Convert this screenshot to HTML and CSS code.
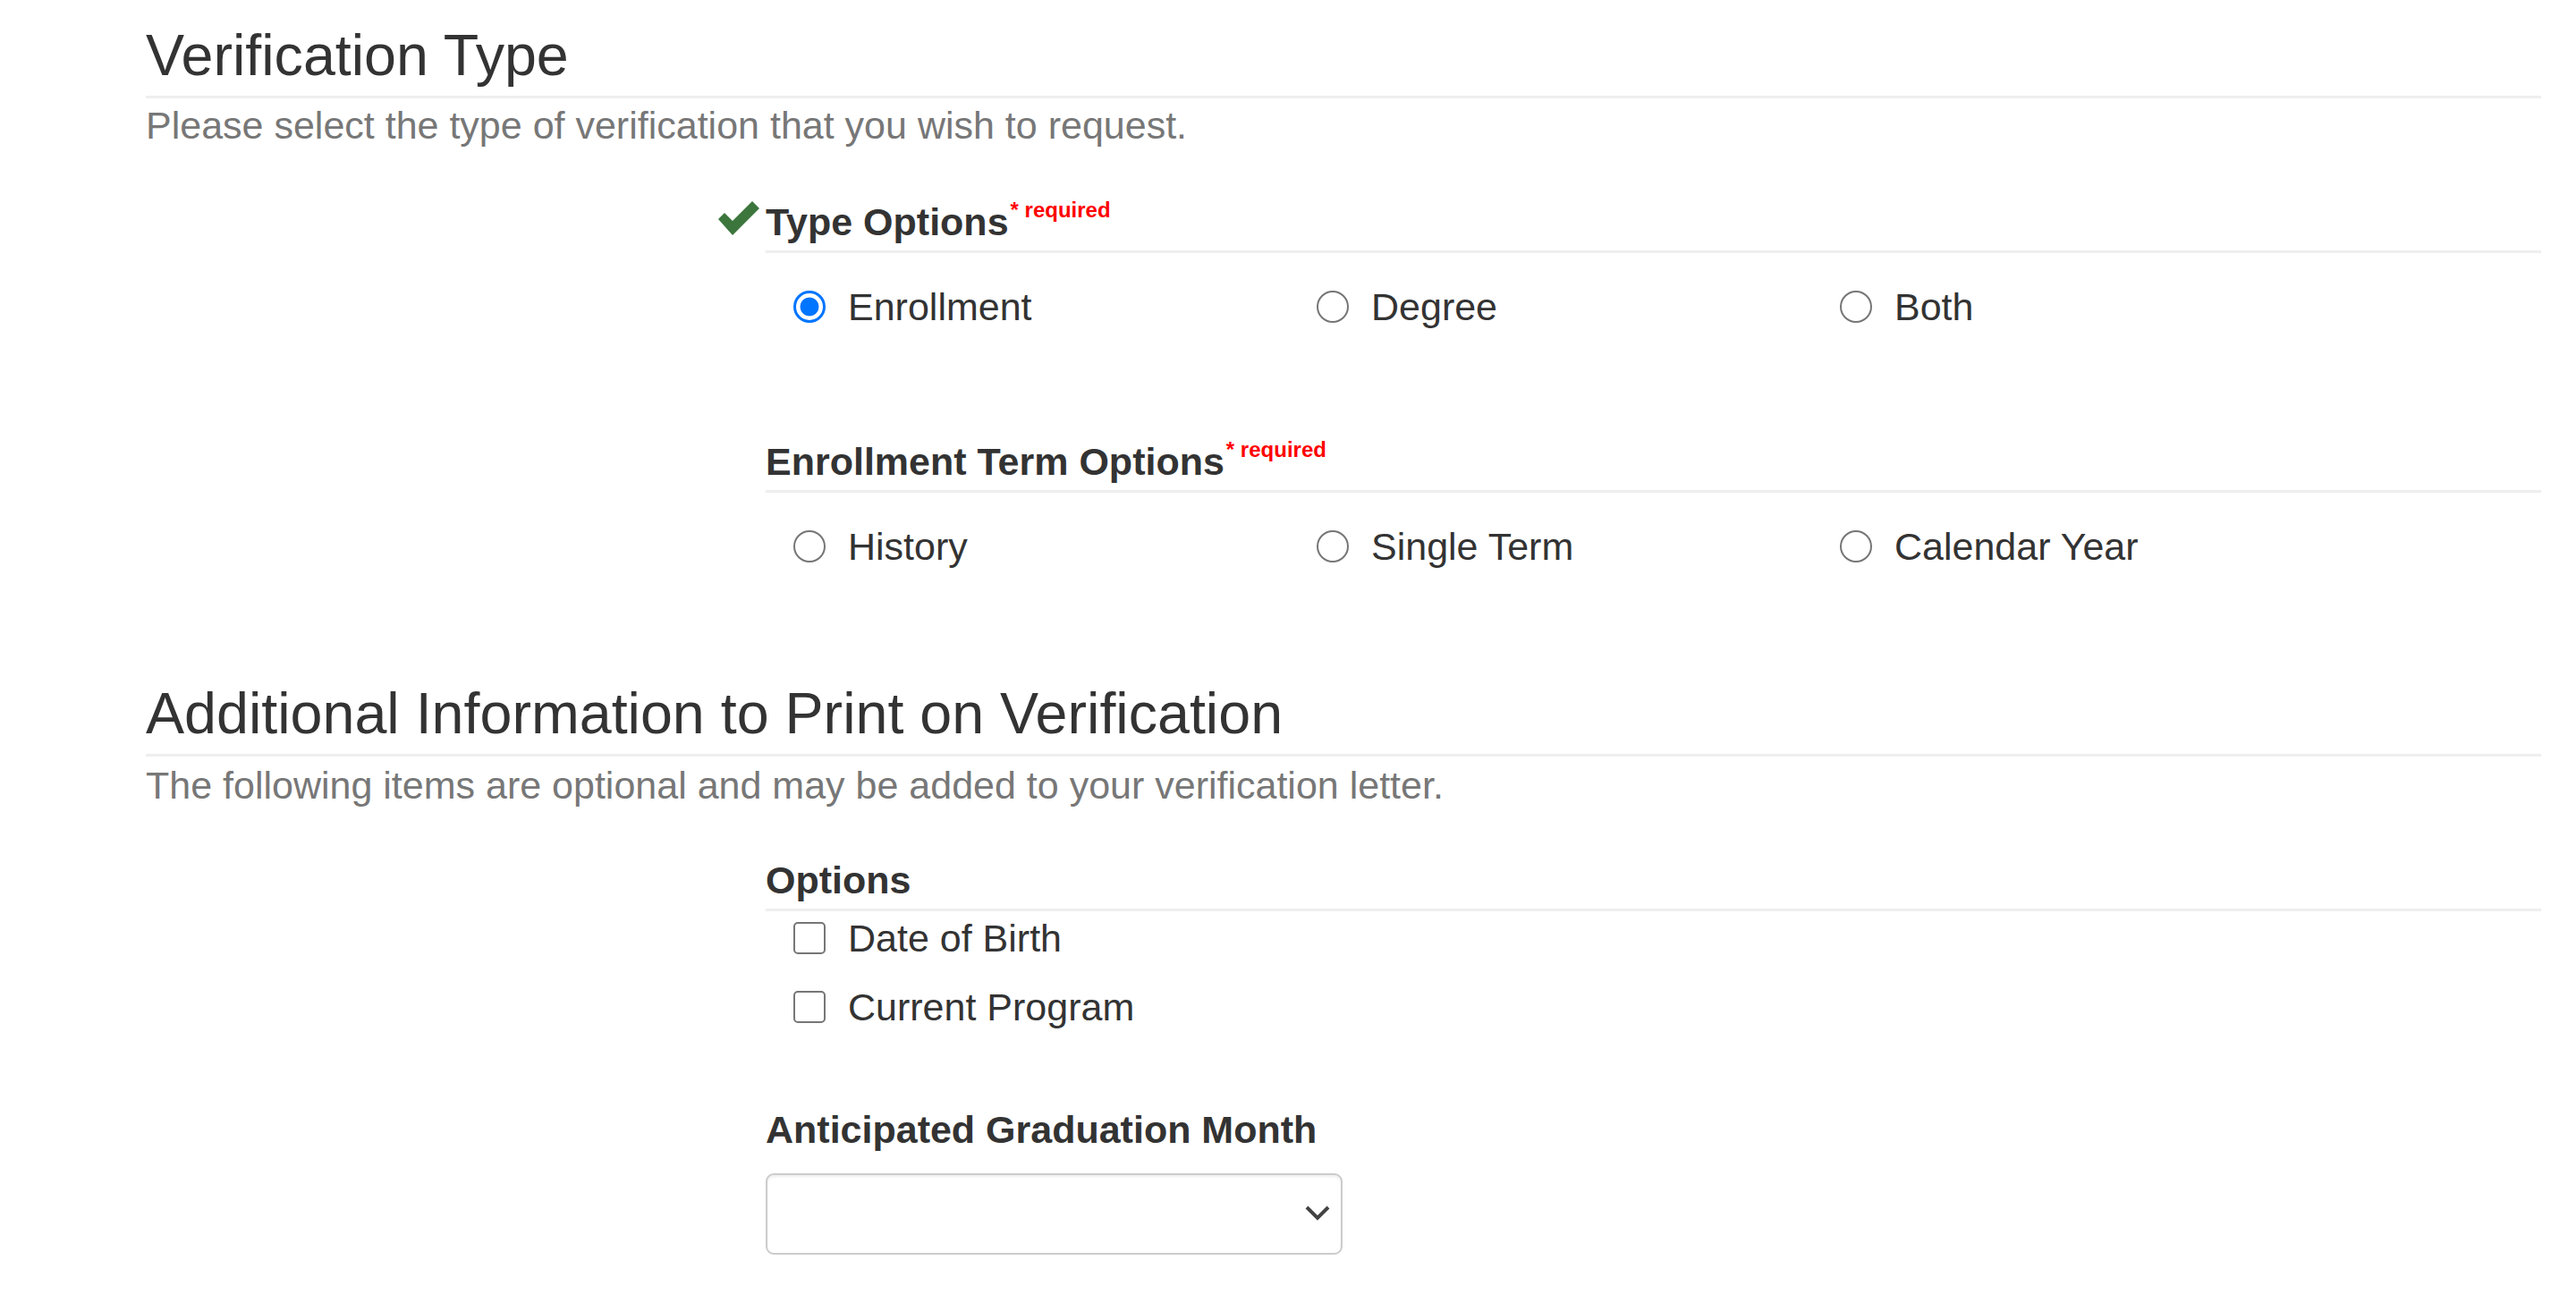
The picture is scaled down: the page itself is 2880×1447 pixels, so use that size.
FILE: index.html
```html
<!DOCTYPE html>
<html lang="en">
<head>
<meta charset="utf-8">
<title>Verification Request</title>
<link rel="stylesheet" href="styles.css">
</head>
<body>
<main class="page">
  <section class="section">
    <h1 class="section-title">Verification Type</h1>
    <p class="section-desc">Please select the type of verification that you wish to request.</p>
    <div class="form-area">
      <div class="group group-first">
        <div class="group-label"><svg class="ok-icon" width="46" height="38" viewBox="0 0 46 38" aria-hidden="true"><polygon points="0,20 7,13 16,22 38,0 46,8 16,38" fill="#3c763d"/></svg>Type Options<span class="req">* required</span></div>
        <div class="radio-row">
          <label class="opt"><input type="radio" name="vtype" checked><span>Enrollment</span></label>
          <label class="opt"><input type="radio" name="vtype"><span>Degree</span></label>
          <label class="opt"><input type="radio" name="vtype"><span>Both</span></label>
        </div>
      </div>
      <div class="group group-next">
        <div class="group-label">Enrollment Term Options<span class="req">* required</span></div>
        <div class="radio-row">
          <label class="opt"><input type="radio" name="term"><span>History</span></label>
          <label class="opt"><input type="radio" name="term"><span>Single Term</span></label>
          <label class="opt"><input type="radio" name="term"><span>Calendar Year</span></label>
        </div>
      </div>
    </div>
  </section>

  <section class="section section-second">
    <h1 class="section-title">Additional Information to Print on Verification</h1>
    <p class="section-desc">The following items are optional and may be added to your verification letter.</p>
    <div class="form-area">
      <div class="group group-first">
        <div class="group-label">Options</div>
        <div class="check-list">
          <label class="opt"><input type="checkbox" class="box"><span>Date of Birth</span></label>
          <label class="opt"><input type="checkbox" class="box"><span>Current Program</span></label>
        </div>
      </div>
      <div class="field">
        <label class="field-label" for="gradMonth">Anticipated Graduation Month</label>
        <div class="select-wrap">
          <select id="gradMonth" class="select"><option value=""></option></select>
          <svg class="chevron" width="28" height="17" viewBox="0 0 28 17" aria-hidden="true"><polyline points="2,2 14,14 26,2" fill="none" stroke="#444" stroke-width="4"/></svg>
        </div>
      </div>
    </div>
  </section>
</main>
</body>
</html>
```

FILE: styles.css
```css
html, body {
  margin: 0;
  padding: 0;
  background: #fff;
}

body {
  font-family: "Liberation Sans", Arial, Helvetica, sans-serif;
  color: #333;
}

.page {
  padding: 26px 39px 0 163px;
}

.section-title {
  margin: 0;
  font-size: 64.6px;
  font-weight: 400;
  line-height: 72px;
  padding-bottom: 9px;
  border-bottom: 3px solid #eee;
  color: #333;
}

.section-desc {
  margin: 0;
  font-size: 43px;
  line-height: 60px;
  color: #777;
}

.section-second {
  margin-top: 121px;
}

.section-second .section-desc {
  margin-top: 2px;
}

.section-second .group-first {
  margin-top: 46px;
}

.form-area {
  margin-left: 693px;
}

.group-first {
  margin-top: 48px;
}

.group-next {
  margin-top: 113px;
}

.group-label {
  font-size: 43px;
  font-weight: 700;
  line-height: 60px;
  padding-bottom: 2px;
  border-bottom: 3px solid #eee;
  color: #333;
}

.ok-icon {
  vertical-align: baseline;
  margin-left: -53px;
  margin-right: 7px;
}

.req {
  font-size: 24px;
  font-weight: 700;
  line-height: 1;
  color: #f00;
  vertical-align: 20px;
  margin-left: 2px;
}

.radio-row {
  display: grid;
  grid-template-columns: repeat(3, 585px);
  padding-left: 31px;
  margin-top: 30px;
}

.opt {
  display: flex;
  align-items: center;
  gap: 25px;
  font-size: 43px;
  line-height: 60px;
  color: #333;
}

.opt input {
  appearance: none;
  -webkit-appearance: none;
  flex: none;
  margin: 0;
  width: 36px;
  height: 36px;
  border: 2.5px solid #767676;
  border-radius: 50%;
  background: #fff;
}

.opt input:checked {
  border: 3px solid #0075ff;
  background: radial-gradient(circle, #0075ff 0, #0075ff 10px, #fff 10.8px);
}

.opt input.box {
  border-radius: 5px;
}

.check-list {
  display: flex;
  flex-direction: column;
  gap: 17px;
  padding-left: 31px;
}

.field {
  margin-top: 77px;
}

.field-label {
  display: block;
  font-size: 43px;
  font-weight: 700;
  line-height: 60px;
  color: #333;
}

.select-wrap {
  position: relative;
  width: 645px;
  margin-top: 19px;
}

.select {
  display: block;
  appearance: none;
  -webkit-appearance: none;
  box-sizing: border-box;
  width: 645px;
  height: 91px;
  margin: 0;
  padding: 0 60px 0 30px;
  font-family: inherit;
  font-size: 43px;
  color: #555;
  background: #fff;
  border: 2.5px solid #ccc;
  border-radius: 9px;
  box-shadow: inset 0 2px 3px rgba(0, 0, 0, 0.075);
}

.chevron {
  position: absolute;
  right: 14px;
  top: 36px;
  pointer-events: none;
}
```
